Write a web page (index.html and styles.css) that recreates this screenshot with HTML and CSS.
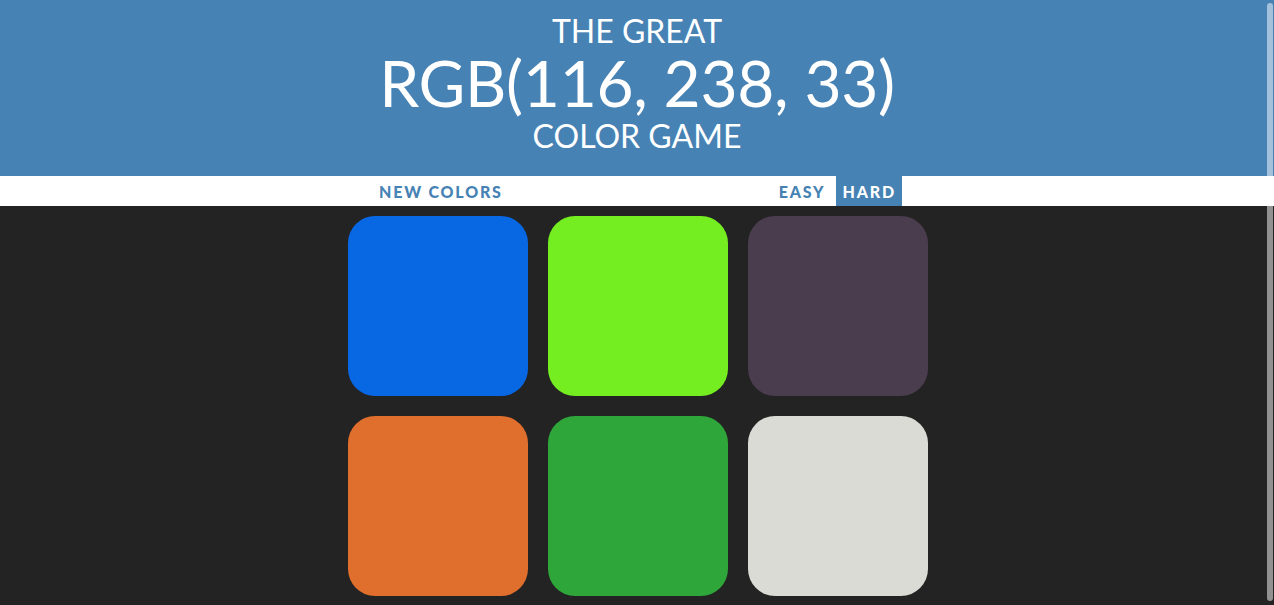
FILE: index.html
```html
<!DOCTYPE html>
<html>
  <head>
    <link rel="stylesheet" href="styles.css">
  </head>
  <body>
    <h1>
      <span class="small">The Great</span>
      <span id="colorDisplay">RGB(116, 238, 33)</span>
      <span class="small">Color Game</span>
    </h1>

    <div id="stripe">
      <button id="reset">New Colors</button>
      <span id="message"></span>
      <button class="mode">Easy</button>
      <button class="mode selected">Hard</button>
    </div>

    <div id="container">
      <div class="square sq-blue"></div>
      <div class="square sq-lime"></div>
      <div class="square sq-plum"></div>
      <div class="square sq-orange"></div>
      <div class="square sq-green"></div>
      <div class="square sq-grey"></div>
    </div>

    <div class="scroll-thumb"></div>
  </body>
</html>
```

FILE: styles.css
```css
html {
  overflow: hidden;
}

body {
  background-color: #232323;
  margin: 0;
  font-family: "Lato", "Liberation Sans", sans-serif;
}

h1 {
  text-align: center;
  line-height: 1.1;
  font-weight: normal;
  font-size: 32px;
  color: white;
  background: steelblue;
  margin: 0;
  padding: 13px 0 23px;
  text-transform: uppercase;
}

h1 span {
  display: block;
}

#colorDisplay {
  font-size: 64px;
  line-height: 70px;
  letter-spacing: -0.3px;
}

#stripe {
  background: white;
  height: 30px;
  text-align: center;
  color: black;
}

#message {
  display: inline-block;
  width: 20%;
}

button {
  border: none;
  background: none;
  text-transform: uppercase;
  height: 100%;
  font-weight: 900;
  color: steelblue;
  letter-spacing: 1.8px;
  font-size: 16px;
  font-family: inherit;
  padding: 0 6px 0 7px;
  outline: none;
}

button:hover,
.selected {
  color: white;
  background: steelblue;
}

#container {
  margin: 0 auto;
  max-width: 600px;
  display: flex;
  flex-wrap: wrap;
  position: relative;
  left: 1px;
}

.square {
  width: 30%;
  padding-bottom: 30%;
  margin: 1.66%;
  border-radius: 15%;
}

.sq-blue { background: #0868e4; }
.sq-lime { background: #74ee21; }
.sq-plum { background: #4a3d4e; }
.sq-orange { background: #e06e2d; }
.sq-green { background: #2ea63a; }
.sq-grey { background: #dbdbd5; }

/* overlay scrollbar thumb */
.scroll-thumb {
  position: fixed;
  top: 3px;
  bottom: 4px;
  right: 1px;
  width: 6px;
  border-radius: 3px;
  background: rgba(255, 255, 255, 0.5);
}
```
